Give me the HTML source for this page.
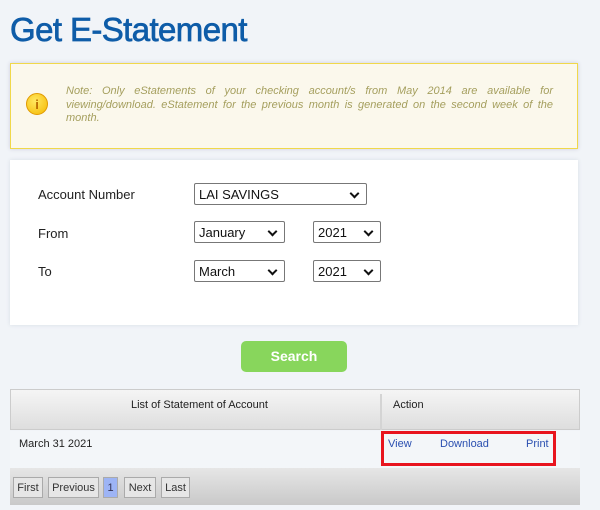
<!DOCTYPE html>
<html><head><style>
body{margin:0;width:600px;height:510px;background:#f1f4f8;font-family:"Liberation Sans",sans-serif;position:relative;overflow:hidden}
.a{position:absolute}
h1{position:absolute;left:10px;top:11px;margin:0;font-size:33px;font-weight:normal;color:#0e5ca8;letter-spacing:-0.6px;-webkit-text-stroke:0.7px #0e5ca8}
.note{left:10px;top:63px;width:566px;height:84px;background:#fbf8ec;border:1px solid #f0d84a;box-shadow:0 0 4px #ccd}
.nt{left:66px;top:85px;width:487px;font-size:11px;font-style:italic;color:#a59f5e;line-height:13.5px;text-align:justify}
.panel{left:10px;top:160px;width:568px;height:165px;background:#fff;box-shadow:0 0 4px #d8dde4}
.lbl{font-size:13px;color:#222}
.sel{position:absolute;height:22px;border:1px solid #777;border-radius:2px;background:#fff;font-size:13px;color:#111;box-sizing:border-box;padding:3px 0 0 4px}
.sel:after{content:"";position:absolute;right:8px;top:6px;width:5px;height:5px;border-right:2px solid #111;border-bottom:2px solid #111;transform:rotate(45deg)}
.btn{left:241px;top:341px;width:106px;height:31px;background:#88d65c;border-radius:5px;color:#fff;font-weight:bold;font-size:14px;text-align:center;line-height:31px}
.hd{left:10px;top:389px;width:570px;height:41px;background:linear-gradient(#f5f5f5,#dedede);border:1px solid #ccc;box-sizing:border-box}
.row{left:10px;top:431px;width:570px;height:37px;background:#f3f6f9;border-bottom:1px solid #ccc}
.pg{left:10px;top:468px;width:570px;height:37px;background:linear-gradient(#e6e6e6,#c9c9c9)}
.pb{position:absolute;top:477px;height:21px;border:1px solid #aaa;background:#e6e6e6;font-size:11px;color:#333;line-height:21px;text-align:center;box-sizing:border-box}
.lk{font-size:11px;color:#2a4fb0}
</style></head><body>
<h1>Get E-Statement</h1>
<div class="a note"></div>
<div class="a" style="left:26px;top:93px;width:22px;height:22px;border-radius:50%;background:radial-gradient(circle at 40% 35%,#ffe860,#f5b800);border:1px solid #e09a00;box-sizing:border-box;color:#b86a00;font-size:13px;text-align:center;line-height:21px;font-weight:bold">i</div>
<div class="a nt">Note: Only eStatements of your checking account/s from May 2014 are available for viewing/download. eStatement for the previous month is generated on the second week of the month.</div>
<div class="a panel"></div>
<div class="a lbl" style="left:38px;top:187px">Account Number</div>
<div class="a lbl" style="left:38px;top:226px">From</div>
<div class="a lbl" style="left:38px;top:264px">To</div>
<div class="sel" style="left:194px;top:183px;width:173px">LAI SAVINGS</div>
<div class="sel" style="left:194px;top:221px;width:91px">January</div>
<div class="sel" style="left:313px;top:221px;width:68px">2021</div>
<div class="sel" style="left:194px;top:260px;width:91px">March</div>
<div class="sel" style="left:313px;top:260px;width:68px">2021</div>
<div class="a btn">Search</div>
<div class="a hd"></div>
<div class="a" style="left:380px;top:394px;width:2px;height:36px;background:#d4d4d4"></div>
<div class="a" style="left:131px;top:399px;font-size:11px;color:#222">List of Statement of Account</div>
<div class="a" style="left:393px;top:399px;font-size:11px;color:#222">Action</div>
<div class="a row"></div>
<div class="a" style="left:19px;top:438px;font-size:11px;color:#222">March 31 2021</div>
<div class="a lk" style="left:388px;top:438px">View</div>
<div class="a lk" style="left:440px;top:438px">Download</div>
<div class="a lk" style="left:526px;top:438px">Print</div>
<div class="a" style="left:381px;top:431px;width:175px;height:35px;border:3px solid #e8141e;box-sizing:border-box"></div>
<div class="a pg"></div>
<div class="pb" style="left:13px;width:30px">First</div>
<div class="pb" style="left:48px;width:51px">Previous</div>
<div class="pb" style="left:103px;width:15px;background:#9db4f5;color:#335">1</div>
<div class="pb" style="left:124px;width:32px">Next</div>
<div class="pb" style="left:161px;width:29px">Last</div>
</body></html>
